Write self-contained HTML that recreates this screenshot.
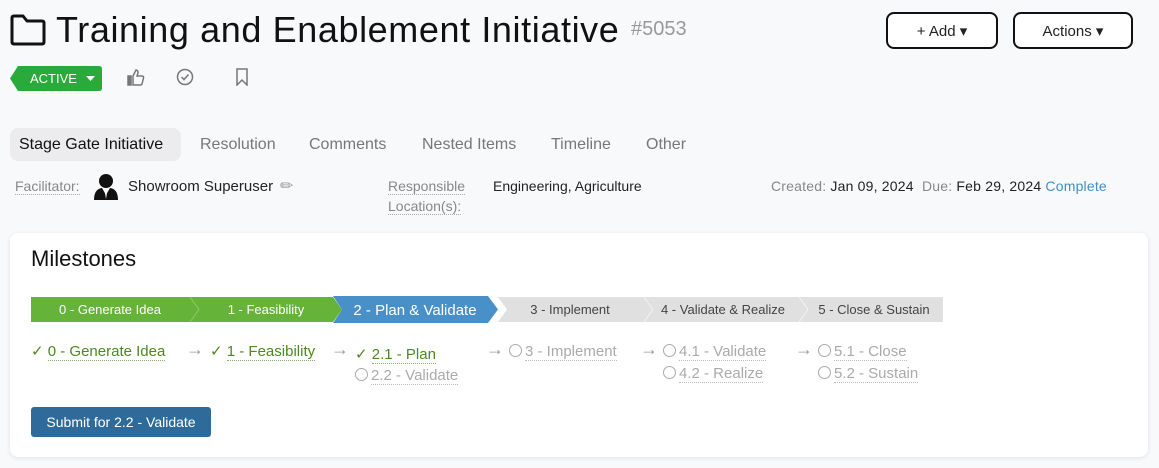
<!DOCTYPE html>
<html><head><style>
body{margin:0;width:1159px;height:468px;background:#f8f9fb;font-family:"Liberation Sans",sans-serif;position:relative;overflow:hidden;color:#222}
.a{position:absolute;white-space:nowrap}
.btn{position:absolute;border:2px solid #111;border-radius:8px;background:#fff;font-size:15px;display:flex;align-items:center;justify-content:center;box-sizing:border-box}
.tab{position:absolute;top:136px;font-size:16px;color:#777}
.lbl{color:#888;font-size:14px;border-bottom:1px dotted #aaa}
.g{color:#4a8a1e;font-size:15px}
.gl{border-bottom:1px dotted #8aaa70}
.m{color:#aaa;font-size:15px}
.ml{border-bottom:1px dotted #bbb}
.circ{display:inline-block;width:11px;height:11px;border:1.3px solid #aaa;border-radius:50%;vertical-align:-1px;margin-right:3px}
.arr{color:#999;font-size:18px}
</style></head><body>
<svg class="a" style="left:10px;top:14px" width="36" height="32" viewBox="0 0 36 32"><path d="M2 4 Q2 2 4 2 H13 L17 7 H32 Q34 7 34 9 V28 Q34 30 32 30 H4 Q2 30 2 28 Z" fill="none" stroke="#111" stroke-width="3" stroke-linejoin="round"/></svg>
<div class="a" style="left:56px;top:9px;font-size:36px;color:#111;letter-spacing:0.6px">Training and Enablement Initiative</div>
<div class="a" style="left:631px;top:18px;font-size:20px;color:#999">#5053</div>
<div class="btn" style="left:886px;top:12px;width:112px;height:37px">+ Add &#9662;</div>
<div class="btn" style="left:1013px;top:12px;width:120px;height:37px">Actions &#9662;</div>
<svg class="a" style="left:10px;top:66px" width="92" height="25"><path d="M8 0 H89 Q92 0 92 3 V22 Q92 25 89 25 H8 L0 12.5 Z" fill="#2aaa3a"/><text x="20" y="17" fill="#fff" font-size="13" font-family="Liberation Sans">ACTIVE</text><path d="M76 10 h9 l-4.5 5z" fill="#fff"/></svg>
<svg class="a" style="left:127px;top:69px" width="18" height="17" viewBox="0 0 18 17" fill="none" stroke="#777" stroke-width="1.5"><rect x="1" y="7" width="3" height="9" fill="#777"/><path d="M6 7 L9 1 Q11 1 11 4 L10 7 H15 Q17 7 16.5 9 L15 15 Q14.5 16 13 16 H6 Z"/></svg>
<svg class="a" style="left:176px;top:68px" width="18" height="18"><circle cx="9" cy="9" r="7.5" fill="none" stroke="#777" stroke-width="1.5"/><path d="M5.5 9 L8 11.5 L12.5 6.5" fill="none" stroke="#777" stroke-width="1.5"/></svg>
<svg class="a" style="left:235px;top:68px" width="14" height="18"><path d="M2 1 H12 V17 L7 12 L2 17 Z" fill="none" stroke="#777" stroke-width="1.5"/></svg>
<div class="a" style="left:10px;top:128px;width:171px;height:33px;background:#ececee;border-radius:8px"></div>
<div class="tab" style="left:19px;color:#111">Stage Gate Initiative</div>
<div class="tab" style="left:200px">Resolution</div>
<div class="tab" style="left:309px">Comments</div>
<div class="tab" style="left:422px">Nested Items</div>
<div class="tab" style="left:551px">Timeline</div>
<div class="tab" style="left:646px">Other</div>
<div class="a lbl" style="left:15px;top:178px">Facilitator:</div>
<svg class="a" style="left:92px;top:173px" width="28" height="28"><circle cx="14" cy="8" r="7" fill="#111"/><path d="M2 27 Q2 16 10 15 L14 22 L18 15 Q26 16 26 27 Z" fill="#111"/><path d="M12.5 17 h3 l-1.5 9z" fill="#fff"/></svg>
<div class="a" style="left:128px;top:178px;font-size:15px">Showroom Superuser</div>
<div class="a" style="left:280px;top:176px;font-size:16px;color:#999">&#9999;</div>
<div class="a lbl" style="left:388px;top:178px">Responsible</div>
<div class="a lbl" style="left:388px;top:198px">Location(s):</div>
<div class="a" style="left:493px;top:178px;font-size:14px">Engineering, Agriculture</div>
<div class="a" style="left:771px;top:178px;font-size:14px;letter-spacing:0.2px"><span style="color:#888">Created:</span> Jan 09, 2024 &nbsp;<span style="color:#888">Due:</span> Feb 29, 2024 <span style="color:#3f8fc2">Complete</span></div>
<div class="a" style="left:10px;top:233px;width:1138px;height:224px;background:#fff;border-radius:8px;box-shadow:0 1px 4px rgba(0,0,0,.1)"></div>
<div class="a" style="left:31px;top:246px;font-size:22px;color:#111">Milestones</div>
<svg class="a" style="left:31px;top:296px" width="915" height="27" font-family="Liberation Sans" font-size="13">
<path d="M0 1 H159 L168 13.5 L159 26 H0 Z" fill="#66b33a"/>
<path d="M159 1 H302 L311 13.5 L302 26 H159 L168 13.5 Z" fill="#66b33a"/>
<path d="M159 1 L168 13.5 L159 26" stroke="#8cca6a" fill="none"/>
<path d="M467 1 H613 L622 13.5 L613 26 H467 L476 13.5 Z" fill="#e0e0e0"/>
<path d="M613 1 H768 L777 13.5 L768 26 H613 L622 13.5 Z" fill="#e0e0e0"/>
<path d="M768 1 H912 V26 H768 L777 13.5 Z" fill="#e0e0e0"/>
<path d="M613 1 L622 13.5 L613 26 M768 1 L777 13.5 L768 26" stroke="#f2f2f2" fill="none"/>
<path d="M302 0 H457 L467 13.5 L457 27 H302 L311 13.5 Z" fill="#4a90c8"/>
<text x="79" y="18" fill="#fff" text-anchor="middle">0 - Generate Idea</text>
<text x="235" y="18" fill="#fff" text-anchor="middle">1 - Feasibility</text>
<text x="384" y="19" fill="#fff" text-anchor="middle" font-size="15">2 - Plan &amp; Validate</text>
<text x="539" y="18" fill="#444" text-anchor="middle">3 - Implement</text>
<text x="692" y="18" fill="#444" text-anchor="middle">4 - Validate &amp; Realize</text>
<text x="843" y="18" fill="#444" text-anchor="middle">5 - Close &amp; Sustain</text>
</svg>
<div class="a g" style="left:31px;top:342px">&#10003; <span class="gl">0 - Generate Idea</span></div>
<div class="a arr" style="left:186px;top:339px">&#8594;</div>
<div class="a g" style="left:210px;top:342px">&#10003; <span class="gl">1 - Feasibility</span></div>
<div class="a arr" style="left:331px;top:339px">&#8594;</div>
<div class="a g" style="left:355px;top:345px">&#10003; <span class="gl">2.1 - Plan</span></div>
<div class="a m" style="left:355px;top:367px"><span class="circ"></span><span class="ml">2.2 - Validate</span></div>
<div class="a arr" style="left:486px;top:339px">&#8594;</div>
<div class="a m" style="left:509px;top:343px"><span class="circ"></span><span class="ml">3 - Implement</span></div>
<div class="a arr" style="left:640px;top:339px">&#8594;</div>
<div class="a m" style="left:663px;top:343px"><span class="circ"></span><span class="ml">4.1 - Validate</span></div>
<div class="a m" style="left:663px;top:365px"><span class="circ"></span><span class="ml">4.2 - Realize</span></div>
<div class="a arr" style="left:795px;top:339px">&#8594;</div>
<div class="a m" style="left:818px;top:343px"><span class="circ"></span><span class="ml">5.1 - Close</span></div>
<div class="a m" style="left:818px;top:365px"><span class="circ"></span><span class="ml">5.2 - Sustain</span></div>
<div class="a" style="left:31px;top:407px;width:180px;height:30px;background:#2f6b9a;border-radius:3px;color:#fff;font-size:14px;line-height:30px;text-align:center">Submit for 2.2 - Validate</div>
</body></html>
